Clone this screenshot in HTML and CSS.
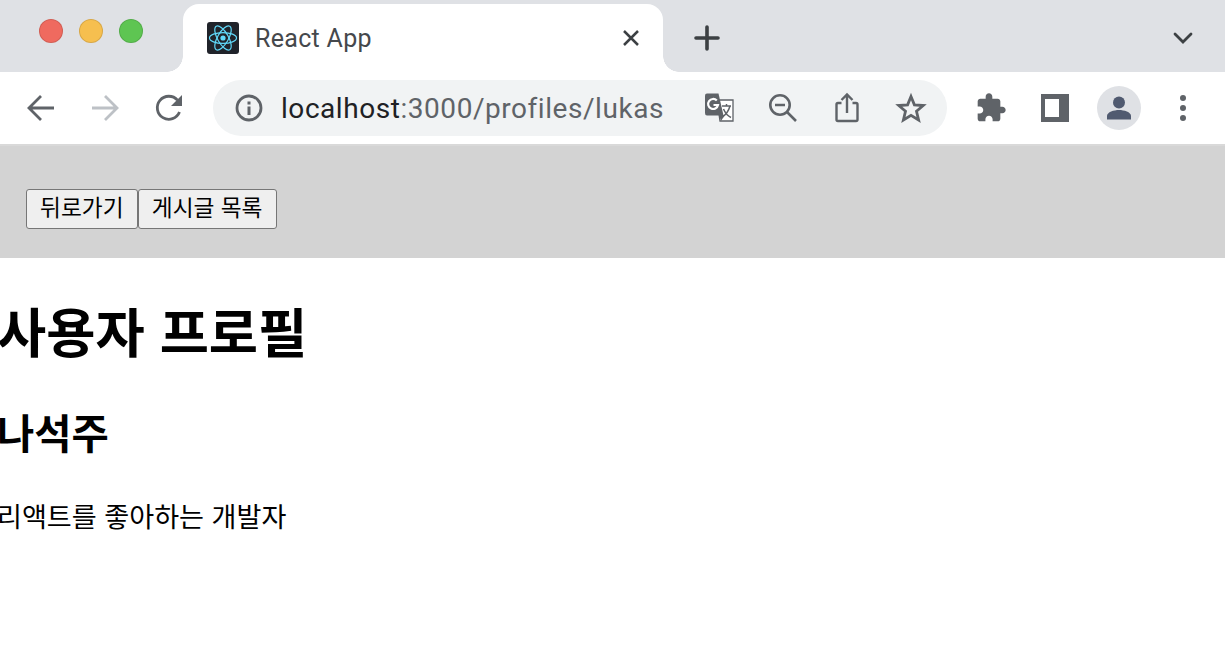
FILE: index.html
```html
<!DOCTYPE html>
<html lang="ko">
<head>
<meta charset="utf-8">
<title>React App</title>
<link rel="stylesheet" href="styles.css">
</head>
<body>
<header class="chrome">
  <div class="tabstrip">
    <div class="lights"><span class="light red"></span><span class="light yellow"></span><span class="light green"></span></div>
    <div class="tab">
      <svg class="favicon" viewBox="0 0 32 32"><rect width="32" height="32" rx="3" fill="#20232a"/><g fill="none" stroke="#61dafb" stroke-width="1.2"><ellipse cx="16" cy="16" rx="13.5" ry="5.4"/><ellipse cx="16" cy="16" rx="13.5" ry="5.4" transform="rotate(60 16 16)"/><ellipse cx="16" cy="16" rx="13.5" ry="5.4" transform="rotate(120 16 16)"/></g><circle cx="16" cy="16" r="2.6" fill="#61dafb"/></svg>
      <span class="tab-title">React App</span>
      <svg class="tab-close" viewBox="0 0 20 20"><path d="M3 3 17 17M17 3 3 17" fill="none" stroke="#3c4043" stroke-width="2.500"/></svg>
    </div>
    <svg class="new-tab" viewBox="0 0 26 26"><path d="M13 2V24M2 13H24" fill="none" stroke="#3c4043" stroke-width="3.6" stroke-linecap="round"/></svg>
    <svg class="tab-menu" viewBox="0 0 20 12"><path d="M2 2 10 10 18 2" fill="none" stroke="#3c4043" stroke-width="2.8" stroke-linecap="round"/></svg>
  </div>
  <div class="toolbar">
    <div class="cell"><svg class="ic" viewBox="0 0 32 32"><path d="M29 16H4M16 4 4 16 16 28" fill="none" stroke="#5f6368" stroke-width="2.8"/></svg></div>
    <div class="cell"><svg class="ic" viewBox="0 0 32 32"><path d="M3 16H28M16 4 28 16 16 28" fill="none" stroke="#bdc1c6" stroke-width="2.8"/></svg></div>
    <div class="cell"><svg class="ic" viewBox="0 0 32 32"><path d="M26.500 20A11.500 11.500 0 1 1 24.500 8.200" fill="none" stroke="#5f6368" stroke-width="2.800"/><path d="M29 3V14H18Z" fill="#5f6368"/></svg></div>
    <div class="omnibox">
      <div class="cell"><svg class="ic" viewBox="0 0 32 32"><circle cx="16" cy="16" r="12" fill="none" stroke="#5f6368" stroke-width="2.800"/><path d="M14.500 14.500H17.500V23H14.500ZM14.500 9.500H17.500V12.500H14.500Z" fill="#5f6368"/></svg></div>
      <div class="url"><span class="host">localhost</span>:3000/profiles/lukas</div>
      <div class="cell"><svg class="ic" viewBox="0 0 32 32"><path d="M14 8H30V29H17Z" fill="#fff" stroke="#5f6368" stroke-width="1.300"/><path d="M4 1.500Q2 1.500 2 3.500V21Q2 23.500 4 23.500H20.500L15.500 1.500Z" fill="#5f6368"/><path d="M13.800 8.600A5 5 0 1 0 15 13H10.500" fill="none" stroke="#fff" stroke-width="2.200"/><path d="M19 14H28M23.500 12V14M27 14Q25 21 19.500 25M20.500 17Q23 23 28 25.500" fill="none" stroke="#5f6368" stroke-width="1.500"/><path d="M16 23 18 29 22 23Z" fill="#5f6368"/></svg></div>
      <div class="cell"><svg class="ic" viewBox="0 0 32 32"><circle cx="13" cy="13" r="9.700" fill="none" stroke="#5f6368" stroke-width="2.600"/><path d="M8 13H18M20 20 29 29" fill="none" stroke="#5f6368" stroke-width="2.600"/></svg></div>
      <div class="cell"><svg class="ic" viewBox="0 0 32 32"><path d="M10.500 11H7Q5.500 11 5.500 12.500V27.500Q5.500 29 7 29H25Q26.500 29 26.500 27.500V12.500Q26.500 11 25 11H21.500" fill="none" stroke="#5f6368" stroke-width="2.400"/><path d="M16 21V3M10.500 8 16 2.500 21.500 8" fill="none" stroke="#5f6368" stroke-width="2.400"/></svg></div>
      <div class="cell"><svg class="ic" viewBox="0 0 32 32"><path d="M16 4.500 19.400 12.800 28.300 13.500 21.500 19.300 23.600 28 16 23.300 8.400 28 10.500 19.300 3.700 13.500 12.600 12.800Z" fill="none" stroke="#5f6368" stroke-width="2.800"/></svg></div>
    </div>
    <div class="cell"><svg class="ic" viewBox="0 0 24 24"><path fill="#5f6368" d="M20.500 11H19V7c0-1.100-.9-2-2-2h-4V3.500C13 2.120 11.880 1 10.500 1S8 2.120 8 3.500V5H4c-1.100 0-1.990.9-1.990 2v3.800H3.500c1.490 0 2.700 1.210 2.700 2.700s-1.210 2.700-2.700 2.700H2V20c0 1.100.9 2 2 2h3.800v-1.500c0-1.490 1.210-2.700 2.700-2.700 1.490 0 2.700 1.210 2.700 2.700V22H17c1.100 0 2-.9 2-2v-4h1.500c1.380 0 2.500-1.120 2.500-2.500S21.880 11 20.500 11z"/></svg></div>
    <div class="cell"><div class="side-panel"></div></div>
    <div class="cell"><div class="avatar"><svg class="avatar-ic" viewBox="0 0 26 26"><circle cx="13" cy="7.500" r="6" fill="#505a70"/><path d="M1 24.500V21C1 17 8 15 13 15S25 17 25 21V24.500Z" fill="#505a70"/></svg></div></div>
    <div class="cell"><svg class="dots" viewBox="0 0 6 26"><circle cx="3" cy="3" r="3" fill="#5f6368"/><circle cx="3" cy="13" r="3" fill="#5f6368"/><circle cx="3" cy="23" r="3" fill="#5f6368"/></svg></div>
  </div>
</header>
<nav class="nav-bar">
  <button class="nav-btn" type="button">뒤로가기</button><button class="nav-btn" type="button">게시글 목록</button>
</nav>
<main class="profile">
  <h1 class="title">사용자 프로필</h1>
  <h2 class="name">나석주</h2>
  <p class="bio">리액트를 좋아하는 개발자</p>
</main>
</body>
</html>
```
FILE: styles.css
```css
* { box-sizing: border-box; }
html, body { margin: 0; padding: 0; height: 100%; overflow: hidden; background: #fff; }
body { font-family: "Noto Sans CJK KR", "Noto Sans", sans-serif; color: #000; }

.chrome { border-bottom: 2px solid #d9d9d9; }

.tabstrip {
  height: 72px;
  background: #dfe1e5;
  display: flex;
  align-items: center;
  padding: 4px 32px 0 39px;
}
.lights { display: flex; gap: 16px; margin-top: -14px; }
.light { width: 24px; height: 24px; border-radius: 50%; border: 1px solid rgba(0,0,0,.12); }
.red { background: #ef6a5f; }
.yellow { background: #f6bf4f; }
.green { background: #5ec552; }

.tab {
  position: relative;
  align-self: stretch;
  width: 480px;
  margin-left: 40px;
  padding: 0 22px 0 24px;
  background: #fff;
  border-radius: 16px 16px 0 0;
  display: flex;
  align-items: center;
}
.tab::before, .tab::after {
  content: "";
  position: absolute;
  bottom: 0;
  width: 16px;
  height: 16px;
}
.tab::before { left: -16px; background: radial-gradient(circle at 0 0, transparent 15.500px, #fff 16px); }
.tab::after { right: -16px; background: radial-gradient(circle at 100% 0, transparent 15.500px, #fff 16px); }
.favicon { width: 32px; height: 32px; flex: none; }
.tab-title {
  margin-left: 16px;
  flex: 1;
  font: 400 25px "Roboto", sans-serif;
  letter-spacing: .3px;
  color: #45484c;
}
.tab-close { width: 20px; height: 20px; flex: none; }
.new-tab { width: 26px; height: 26px; margin-left: 31px; flex: none; }
.tab-menu { width: 20px; height: 12px; margin-left: auto; flex: none; }

.toolbar {
  height: 72px;
  background: #fff;
  display: flex;
  align-items: center;
  padding: 0 10px 0 9px;
}
.cell {
  width: 64px;
  height: 56px;
  flex: none;
  display: flex;
  align-items: center;
  justify-content: center;
}
.ic { width: 32px; height: 32px; }
.omnibox {
  width: 734px;
  height: 56px;
  margin: 0 12px;
  padding: 0 4px;
  background: #f1f3f4;
  border-radius: 28px;
  display: flex;
  align-items: center;
}
.url {
  flex: 1;
  font: 400 28px "Roboto", sans-serif;
  letter-spacing: .55px;
  color: #5f6368;
  white-space: nowrap;
}
.host { color: #202124; }
.side-panel {
  width: 28px;
  height: 28px;
  background: #fff;
  border-style: solid;
  border-color: #5f6368;
  border-width: 5px 10px 5px 4px;
}
.avatar {
  width: 44px;
  height: 44px;
  border-radius: 50%;
  background: #dfe1e5;
  display: flex;
  align-items: center;
  justify-content: center;
}
.avatar-ic { width: 26px; height: 26px; }
.dots { width: 6px; height: 26px; }

.nav-bar {
  height: 112px;
  background: #d3d3d3;
  padding: 43px 26px 29px;
  display: flex;
  align-items: flex-start;
}
.nav-btn {
  height: 40px;
  padding: 0 13.100px 5px;
  font: 400 22.700px "Noto Sans CJK KR", sans-serif;
  color: #000;
  background: #efefef;
  border: 1px solid #767676;
  border-radius: 3px;
}

.profile { margin-left: -3px; }
.title { margin: 36px 0 0; font-size: 53.500px; font-weight: 700; line-height: 72px; }
.name { margin: 38px 0 0; font-size: 40.500px; font-weight: 700; line-height: 56px; }
.bio { margin: 37px 0 0; font-size: 27.100px; line-height: 38px; }
```
